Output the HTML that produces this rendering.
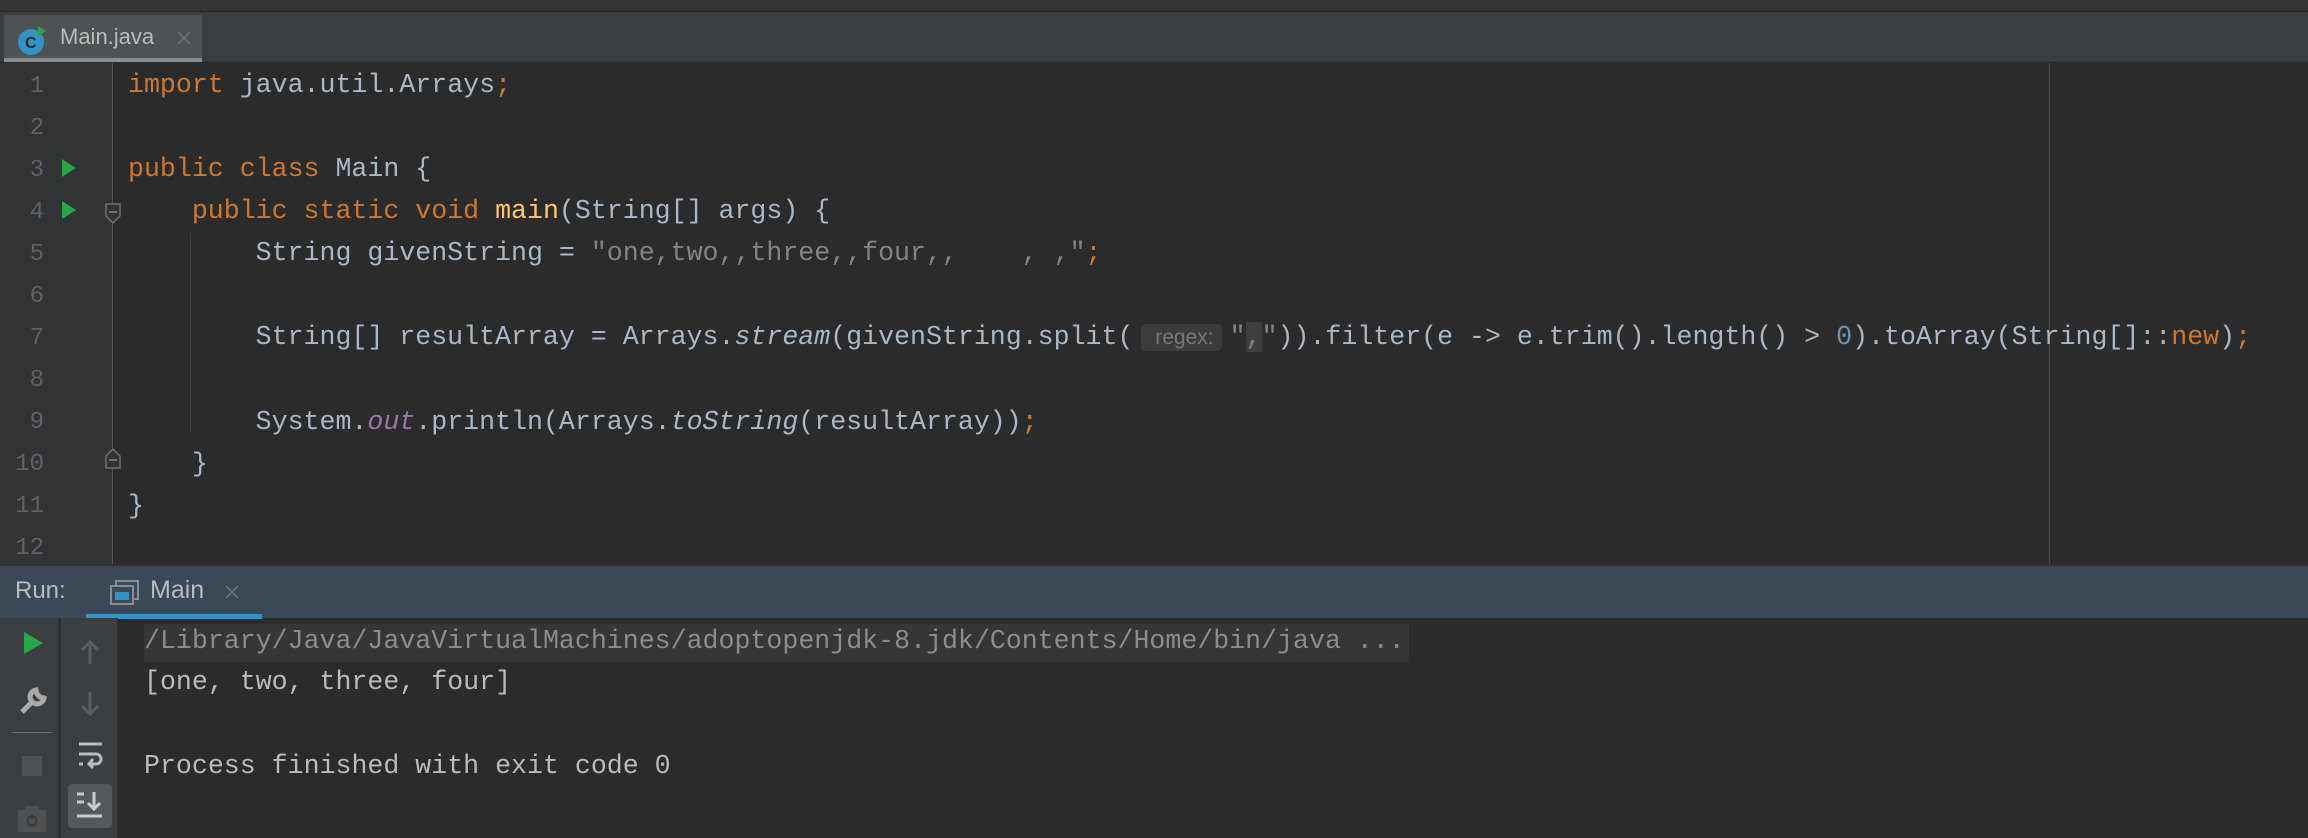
<!DOCTYPE html>
<html><head><meta charset="utf-8"><style>
*{margin:0;padding:0;box-sizing:border-box}
body{width:2308px;height:838px;background:#2b2b2b;overflow:hidden;position:relative;font-family:"Liberation Mono",monospace;font-size:26.6px;color:#a9b7c6}
.top{position:absolute;left:0;top:0;width:2308px;height:12px;background:#313335;border-bottom:1px solid #252525}
.tabs{position:absolute;left:0;top:12px;width:2308px;height:50px;background:#3c3f41;border-bottom:1px solid #323232}
.tab{position:absolute;left:4px;top:3px;width:198px;height:47px;background:#4e5254;border-bottom:4px solid #8a8d8f}
.tab span{position:absolute;left:56px;top:9px;font-family:"Liberation Sans",sans-serif;font-size:22px;color:#bbbbbb}
.gutter{position:absolute;left:0;top:63px;width:113px;height:501px;background:#313335;border-right:1px solid #555}
.ln{position:absolute;left:0;width:44px;text-align:right;color:#606366;font-size:24px}
.code{position:absolute;left:128px;white-space:pre;line-height:42px}
.k{color:#cc7832}.m{color:#ffc66d}.s{color:#7f8487}.i{font-style:italic;color:#9876aa}.n{color:#6897bb}
.run{position:absolute;left:0;top:564px;width:2308px;height:54px;background:#3a4857;border-top:2px solid #323232}
.side1{position:absolute;left:0;top:618px;width:60px;height:220px;background:#3c3f41;border-right:2px solid #323232}
.side2{position:absolute;left:61px;top:618px;width:57px;height:220px;background:#3c3f41;border-right:1px solid #323232}
.con{position:absolute;left:144px;white-space:pre;color:#bbbbbb}
.tri{position:absolute;width:0;height:0;border-top:9px solid transparent;border-bottom:9px solid transparent;border-left:14px solid #2aa64a}
</style></head><body>
<div class="top"></div>
<div class="tabs"><div class="tab">
<svg style="position:absolute;left:12px;top:8px" width="34" height="34" viewBox="0 0 34 34"><circle cx="15" cy="19" r="13" fill="#3592c4"/><text x="9" y="25" font-family="Liberation Sans" font-size="16" font-weight="bold" fill="#2b2b2b">C</text><path d="M22 3 L30 8 L22 13Z" fill="#2aa64a"/></svg>
<span>Main.java</span>
<svg style="position:absolute;left:172px;top:15px" width="16" height="16"><path d="M2 2L14 14M14 2L2 14" stroke="#6e7072" stroke-width="1.5"/></svg>
</div></div>
<div class="gutter">
<div class="ln" style="top:10px">1</div><div class="ln" style="top:52px">2</div><div class="ln" style="top:94px">3</div><div class="ln" style="top:136px">4</div><div class="ln" style="top:178px">5</div><div class="ln" style="top:220px">6</div><div class="ln" style="top:262px">7</div><div class="ln" style="top:304px">8</div><div class="ln" style="top:346px">9</div><div class="ln" style="top:388px;width:44px">10</div><div class="ln" style="top:430px">11</div><div class="ln" style="top:472px">12</div>
</div>
<div class="tri" style="left:62px;top:159px"></div>
<div class="tri" style="left:62px;top:201px"></div>
<svg style="position:absolute;left:104px;top:202px" width="20" height="24"><path d="M2 2H16V14L9 21L2 14Z" fill="#313335" stroke="#6e7072" stroke-width="1.5"/><path d="M5 10H13" stroke="#8a8d8f" stroke-width="1.5"/></svg>
<svg style="position:absolute;left:104px;top:446px" width="20" height="24"><path d="M2 22H16V10L9 3L2 10Z" fill="#313335" stroke="#6e7072" stroke-width="1.5"/><path d="M5 14H13" stroke="#8a8d8f" stroke-width="1.5"/></svg>
<div style="position:absolute;left:190px;top:233px;width:1px;height:200px;background:#3b3b3b"></div>
<div style="position:absolute;left:2049px;top:63px;width:1px;height:501px;background:#4a4a4a"></div>
<div class="code" style="top:64px"><span class="k">import</span> java.util.Arrays<span class="k">;</span>

<span class="k">public class</span> Main {
    <span class="k">public static void</span> <span class="m">main</span>(String[] args) {
        String givenString = <span class="s">"one,two,,three,,four,,    , ,"</span><span class="k">;</span>

        String[] resultArray = Arrays.<span style="font-style:italic">stream</span>(givenString.split(<span style="font-family:'Liberation Sans',sans-serif;font-size:21px;color:#787878;background:#3b3b3b;border-radius:5px;padding:2px 8px;margin:0 8px"> regex:</span><span class="s">"</span><span class="s" style="background:#3f3f3f">,</span><span class="s">"</span>)).filter(e -&gt; e.trim().length() &gt; <span class="n">0</span>).toArray(String[]::<span class="k">new</span>)<span class="k">;</span>

        System.<span class="i">out</span>.println(Arrays.<span style="font-style:italic">toString</span>(resultArray))<span class="k">;</span>
    }
}
</div>
<div class="run">
<span style="position:absolute;left:15px;top:11px;font-family:'Liberation Sans',sans-serif;font-size:24px;color:#bbbbbb">Run:</span>
<svg style="position:absolute;left:110px;top:14px" width="30" height="26"><rect x="6" y="1" width="22" height="18" fill="none" stroke="#8a8d8f" stroke-width="2"/><rect x="1" y="6" width="22" height="18" fill="#3a4857" stroke="#8a8d8f" stroke-width="2"/><rect x="5" y="12" width="14" height="8" fill="#3592c4"/></svg>
<span style="position:absolute;left:150px;top:10px;font-family:'Liberation Sans',sans-serif;font-size:25px;color:#bbbbbb">Main</span>
<svg style="position:absolute;left:224px;top:18px" width="16" height="16"><path d="M2 2L14 14M14 2L2 14" stroke="#6e7072" stroke-width="1.5"/></svg>
<div style="position:absolute;left:86px;top:48px;width:176px;height:5px;background:#3592c4"></div>
</div>
<div class="side1"></div><div class="side2"></div>
<div class="tri" style="left:24px;top:632px;border-top-width:11px;border-bottom-width:11px;border-left-width:19px"></div>
<svg style="position:absolute;left:16px;top:684px" width="34" height="34"><path d="M6 28L18 16M20 6a7 7 0 1 0 8 8l-4-1-3-3z" stroke="#aaaaaa" stroke-width="5" fill="none"/></svg>
<div style="position:absolute;left:12px;top:732px;width:40px;height:1px;background:#6e7072"></div>
<div style="position:absolute;left:22px;top:756px;width:20px;height:20px;background:#4f5153"></div>
<svg style="position:absolute;left:16px;top:804px" width="32" height="30"><rect x="2" y="6" width="28" height="22" fill="#4f5153"/><rect x="9" y="2" width="14" height="6" fill="#4f5153"/><circle cx="16" cy="17" r="6" fill="#3c3f41"/><circle cx="16" cy="17" r="3" fill="#4f5153"/></svg>
<svg style="position:absolute;left:78px;top:638px" width="24" height="28"><path d="M12 26V4M4 12L12 4L20 12" stroke="#5a5d5f" stroke-width="3" fill="none"/></svg>
<svg style="position:absolute;left:78px;top:690px" width="24" height="28"><path d="M12 2V24M4 16L12 24L20 16" stroke="#5a5d5f" stroke-width="3" fill="none"/></svg>
<svg style="position:absolute;left:78px;top:740px" width="26" height="30"><path d="M1 4H24M1 14H18a5 5 0 0 1 0 10H12M15 19L11 24L15 28M1 24H5" stroke="#bbbbbb" stroke-width="3" fill="none"/></svg>
<div style="position:absolute;left:68px;top:784px;width:44px;height:44px;background:#55595b;border-radius:4px"></div>
<svg style="position:absolute;left:76px;top:790px" width="30" height="30"><path d="M1 4H8M1 12H8M1 26H26M18 2V18M12 13L18 19L24 13" stroke="#cccccc" stroke-width="3" fill="none"/></svg>
<div style="position:absolute;left:144px;top:624px;width:1265px;height:38px;background:#363636"></div>
<div class="con" style="top:626px;color:#8c8c8c">/Library/Java/JavaVirtualMachines/adoptopenjdk-8.jdk/Contents/Home/bin/java ...</div>
<div class="con" style="top:667px">[one, two, three, four]</div>
<div class="con" style="top:751px">Process finished with exit code 0</div>
</body></html>
